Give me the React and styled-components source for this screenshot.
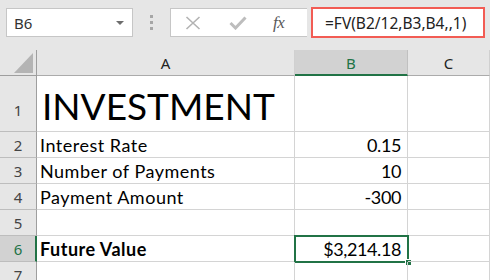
import React from 'react'
import styled, { createGlobalStyle } from 'styled-components'

const GlobalStyle = createGlobalStyle`
  html, body {
    margin: 0;
    padding: 0;
    background: #fff;
    overflow: hidden;
  }
  * { box-sizing: border-box; }
`

const UI_FONT = `"Noto Sans", "Open Sans", sans-serif`
const CELL_FONT = `Lato, "Liberation Sans", sans-serif`
const GREEN = '#217346'

const Page = styled.div`
  width: 490px;
  height: 280px;
  display: flex;
  flex-direction: column;
  background: #e6e6e6;
  overflow: hidden;
`

const Toolbar = styled.div`
  height: 50px;
  flex: none;
  display: flex;
  align-items: flex-start;
  padding: 8px 0 0 6px;
`

const NameBox = styled.div`
  width: 127px;
  height: 29px;
  background: #fff;
  border: 1px solid #c6c6c6;
  display: flex;
  align-items: center;
  justify-content: space-between;
  padding: 0 8px 0 7px;
  font-family: ${UI_FONT};
  font-size: 15px;
  color: #333;
`

const Caret = styled.span`
  width: 0;
  height: 0;
  border-left: 4px solid transparent;
  border-right: 4px solid transparent;
  border-top: 4px solid #6d6d6d;
  margin-top: 1px;
`

const Grip = styled.div`
  width: 37px;
  height: 29px;
  display: flex;
  flex-direction: column;
  align-items: center;
  justify-content: center;
  gap: 3px;

  span {
    width: 3px;
    height: 3px;
    background: #a6a6a6;
  }
`

const ButtonBox = styled.div`
  width: 137px;
  height: 29px;
  background: #fff;
  border: 1px solid #c6c6c6;
  border-right: none;
  display: flex;
  align-items: center;
  padding-left: 14px;
`

const IconSlot = styled.div`
  width: ${p => p.w}px;
  display: flex;
  align-items: center;
`

const Fx = styled.span`
  font-family: "Liberation Serif", "DejaVu Serif", serif;
  font-style: italic;
  font-size: 17px;
  color: #595959;
  letter-spacing: -0.5px;
`

const Gap = styled.div`
  width: 4px;
`

const FormulaBox = styled.div`
  flex: 1;
  height: 31px;
  margin-top: -1px;
  margin-right: 5px;
  background: #fff;
  border: 2px solid #f25c54;
  display: flex;
  align-items: center;
  padding-left: 12px;
  font-family: ${UI_FONT};
  font-size: 15.5px;
  color: #222;
`

const Sheet = styled.div`
  flex: none;
  display: grid;
  grid-template-columns: 37px 258px 113px 1fr;
  grid-template-rows: 26px 56px repeat(6, 26px);
  background: #fff;
`

const ColHead = styled.div`
  background: ${p => (p.active ? '#d2d2d2' : '#e6e6e6')};
  border-right: 1px solid ${p => (p.active ? '#c0c0c0' : '#d0d0d0')};
  border-bottom: ${p => (p.active ? `2px solid ${GREEN}` : '1px solid #ababab')};
  display: flex;
  align-items: center;
  justify-content: center;
  font-family: ${UI_FONT};
  font-size: 15px;
  color: ${p => (p.active ? GREEN : '#222')};
  padding-top: ${p => (p.active ? '1px' : '0')};
`

const Corner = styled.div`
  background: #e6e6e6;
  border-right: 1px solid #9e9e9e;
  border-bottom: 1px solid #9e9e9e;
  display: flex;
  align-items: flex-end;
  justify-content: flex-end;
  padding: 0 3px 2px 0;
`

const RowHead = styled.div`
  background: ${p => (p.active ? '#d2d2d2' : '#e6e6e6')};
  border-right: ${p => (p.active ? `2px solid ${GREEN}` : '1px solid #9e9e9e')};
  border-bottom: 1px solid #bdbdbd;
  display: flex;
  align-items: center;
  justify-content: center;
  font-family: ${UI_FONT};
  font-size: 15px;
  color: ${p => (p.active ? GREEN : '#444')};
  padding: ${p => (p.big ? '12px 0 0 0' : p.active ? '0 0 0 1px' : '0')};
`

const Cell = styled.div`
  position: relative;
  border-right: 1px solid #d4d4d4;
  border-bottom: 1px solid #d4d4d4;
  display: flex;
  align-items: ${p => (p.big ? 'flex-end' : 'center')};
  justify-content: ${p => (p.num ? 'flex-end' : 'flex-start')};
  padding: ${p => (p.big ? '0 0 7px 5px' : p.num ? '1px 6px 0 0' : '1px 0 0 3px')};
  font-family: ${CELL_FONT};
  font-size: ${p => (p.big ? '37px' : '18px')};
  font-weight: ${p => (p.bold ? 700 : 400)};
  letter-spacing: ${p => (p.big ? '0' : p.num ? '-0.4px' : '0.5px')};
  color: #000;
  white-space: nowrap;
  line-height: 1;
`

const Selection = styled.div`
  position: absolute;
  left: -1px;
  top: -1px;
  right: -2px;
  bottom: -2px;
  border: 2px solid ${GREEN};
  pointer-events: none;
`

const Handle = styled.div`
  position: absolute;
  right: -5px;
  bottom: -5px;
  width: 7px;
  height: 7px;
  background: ${GREEN};
  border: 1px solid #fff;
`

const rows = [
  { n: 1, a: 'INVESTMENT', big: true },
  { n: 2, a: 'Interest Rate', b: '0.15' },
  { n: 3, a: 'Number of Payments', b: '10' },
  { n: 4, a: 'Payment Amount', b: '-300' },
  { n: 5 },
  { n: 6, a: 'Future Value', b: '$3,214.18', bold: true, active: true },
  { n: 7 }
]

export default function App() {
  return (
    <Page>
      <GlobalStyle />
      <Toolbar>
        <NameBox>
          B6
          <Caret />
        </NameBox>
        <Grip>
          <span />
          <span />
          <span />
        </Grip>
        <ButtonBox>
          <IconSlot w={44}>
            <svg width="16" height="14" viewBox="0 0 16 14">
              <path d="M1.5 1 L14.5 13 M14.5 1 L1.5 13" stroke="#b3b3b3" strokeWidth="1.6" fill="none" />
            </svg>
          </IconSlot>
          <IconSlot w={44}>
            <svg width="18" height="14" viewBox="0 0 18 14">
              <path d="M1.5 7 L6.5 12 L16.5 1.5" stroke="#bdbdbd" strokeWidth="3" fill="none" />
            </svg>
          </IconSlot>
          <IconSlot w={30}>
            <Fx>fx</Fx>
          </IconSlot>
        </ButtonBox>
        <Gap />
        <FormulaBox>=FV(B2/12,B3,B4,,1)</FormulaBox>
      </Toolbar>
      <Sheet>
        <Corner>
          <svg width="19" height="20" viewBox="0 0 19 20">
            <path d="M19 0 L19 20 L0 20 Z" fill="#b4b4b4" />
          </svg>
        </Corner>
        <ColHead>A</ColHead>
        <ColHead active>B</ColHead>
        <ColHead>C</ColHead>
        {rows.map(r => (
          <React.Fragment key={r.n}>
            <RowHead big={r.big} active={r.active}>{r.n}</RowHead>
            <Cell big={r.big} bold={r.bold}>{r.a}</Cell>
            <Cell num>
              {r.b}
              {r.active && (
                <Selection>
                  <Handle />
                </Selection>
              )}
            </Cell>
            <Cell />
          </React.Fragment>
        ))}
      </Sheet>
    </Page>
  )
}
